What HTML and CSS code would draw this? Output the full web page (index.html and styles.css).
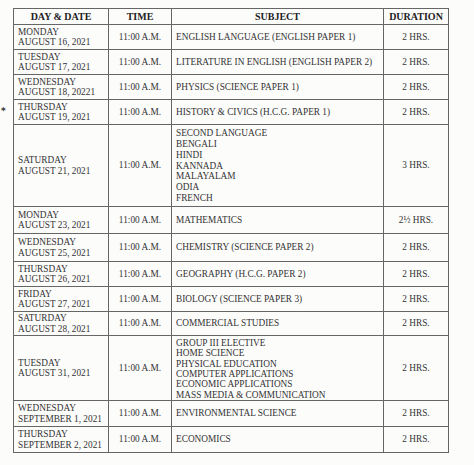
FILE: index.html
```html
<!DOCTYPE html>
<html>
<head>
<meta charset="utf-8">
<link rel="stylesheet" href="styles.css">
</head>
<body>
<div class="page">
<table class="sched">
  <colgroup>
    <col class="c-day"><col class="c-time"><col class="c-subj"><col class="c-dur">
  </colgroup>
  <tr class="head"><th>DAY &amp; DATE</th><th>TIME</th><th>SUBJECT</th><th>DURATION</th></tr>
  <tr class="h25"><td class="day">MONDAY<br>AUGUST 16, 2021</td><td class="time">11:00 A.M.</td><td class="subj">ENGLISH LANGUAGE (ENGLISH PAPER 1)</td><td class="dur">2 HRS.</td></tr>
  <tr class="h25"><td class="day">TUESDAY<br>AUGUST 17, 2021</td><td class="time">11:00 A.M.</td><td class="subj">LITERATURE IN ENGLISH (ENGLISH PAPER 2)</td><td class="dur">2 HRS.</td></tr>
  <tr class="h25"><td class="day">WEDNESDAY<br>AUGUST 18, 20221</td><td class="time">11:00 A.M.</td><td class="subj">PHYSICS (SCIENCE PAPER 1)</td><td class="dur">2 HRS.</td></tr>
  <tr class="h25"><td class="day mark"><span class="star">*</span>THURSDAY<br>AUGUST 19, 2021</td><td class="time">11:00 A.M.</td><td class="subj">HISTORY &amp; CIVICS (H.C.G. PAPER 1)</td><td class="dur">2 HRS.</td></tr>
  <tr class="h82"><td class="day">SATURDAY<br>AUGUST 21, 2021</td><td class="time">11:00 A.M.</td><td class="subj list7">SECOND LANGUAGE<br>BENGALI<br>HINDI<br>KANNADA<br>MALAYALAM<br>ODIA<br>FRENCH</td><td class="dur">3 HRS.</td></tr>
  <tr class="h27"><td class="day">MONDAY<br>AUGUST 23, 2021</td><td class="time">11:00 A.M.</td><td class="subj">MATHEMATICS</td><td class="dur">2½ HRS.</td></tr>
  <tr class="h28"><td class="day">WEDNESDAY<br>AUGUST 25, 2021</td><td class="time">11:00 A.M.</td><td class="subj">CHEMISTRY (SCIENCE PAPER 2)</td><td class="dur">2 HRS.</td></tr>
  <tr class="h25"><td class="day">THURSDAY<br>AUGUST 26, 2021</td><td class="time">11:00 A.M.</td><td class="subj">GEOGRAPHY (H.C.G. PAPER 2)</td><td class="dur">2 HRS.</td></tr>
  <tr class="h25"><td class="day">FRIDAY<br>AUGUST 27, 2021</td><td class="time">11:00 A.M.</td><td class="subj">BIOLOGY (SCIENCE PAPER 3)</td><td class="dur">2 HRS.</td></tr>
  <tr class="h24"><td class="day">SATURDAY<br>AUGUST 28, 2021</td><td class="time">11:00 A.M.</td><td class="subj">COMMERCIAL STUDIES</td><td class="dur">2 HRS.</td></tr>
  <tr class="h65"><td class="day">TUESDAY<br>AUGUST 31, 2021</td><td class="time">11:00 A.M.</td><td class="subj list6">GROUP III ELECTIVE<br>HOME SCIENCE<br>PHYSICAL EDUCATION<br>COMPUTER APPLICATIONS<br>ECONOMIC APPLICATIONS<br>MASS MEDIA &amp; COMMUNICATION</td><td class="dur">2 HRS.</td></tr>
  <tr class="h26"><td class="day">WEDNESDAY<br>SEPTEMBER 1, 2021</td><td class="time">11:00 A.M.</td><td class="subj">ENVIRONMENTAL SCIENCE</td><td class="dur">2 HRS.</td></tr>
  <tr class="h26"><td class="day">THURSDAY<br>SEPTEMBER 2, 2021</td><td class="time">11:00 A.M.</td><td class="subj">ECONOMICS</td><td class="dur">2 HRS.</td></tr>
</table>
</div>
</body>
</html>
```

FILE: styles.css
```css
html, body {
  margin: 0;
  padding: 0;
  background: #fcfcfb;
}
.page {
  padding: 8px 0 0 13px;
}
.sched {
  border-collapse: separate;
  border-spacing: 0;
  table-layout: fixed;
  width: 436px;
  border-top: 1px solid #666;
  border-left: 1px solid #666;
  font-family: "Liberation Serif", "Times New Roman", serif;
  font-size: 9.3px;
  line-height: 10.5px;
  color: #333;
}
.c-day { width: 95px; }
.c-time { width: 63px; }
.c-subj { width: 212px; }
.c-dur { width: 65px; }
.sched th, .sched td {
  border-right: 1px solid #666;
  border-bottom: 1px solid #666;
  padding: 0;
  vertical-align: middle;
  white-space: nowrap;
  overflow: visible;
}
.sched th {
  font-weight: bold;
  font-size: 10px;
  color: #222;
  text-align: center;
  height: 15px;
  line-height: 12px;
}
.head { height: 16px; }
.h24 { height: 24px; }
.h25 { height: 25px; }
.h26 { height: 26px; }
.h27 { height: 27px; }
.h28 { height: 28px; }
.h65 { height: 65px; }
.h82 { height: 82px; }
.day {
  padding-left: 4px !important;
  text-align: left;
}
.mark { position: relative; }
.star {
  position: absolute;
  left: -13px;
  top: 6px;
  font-family: "DejaVu Sans", sans-serif;
  font-weight: bold;
  font-size: 9px;
  color: #333;
}
.time, .dur { text-align: center; }
.subj {
  padding-left: 4px !important;
  text-align: left;
}
.list7 { line-height: 10.8px; padding-top: 1px !important; }
.list6 { line-height: 10.3px; padding-top: 2px !important; }
```
